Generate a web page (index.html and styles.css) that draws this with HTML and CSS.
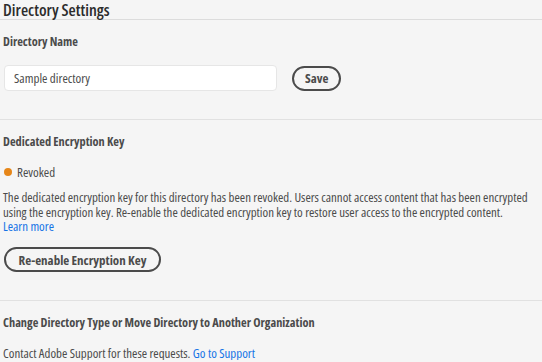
FILE: index.html
```html
<!DOCTYPE html>
<html lang="en">
<head>
  <meta charset="UTF-8">
  <title>Directory Settings</title>
  <link rel="stylesheet" href="styles.css">
</head>
<body>

  <header class="page-head">
    <h1>Directory Settings</h1>
  </header>

  <section class="section">
    <h2>Directory Name</h2>
    <div class="name-row">
      <input class="text-field" type="text" value="Sample directory">
      <button class="btn">Save</button>
    </div>
  </section>

  <section class="section">
    <h2>Dedicated Encryption Key</h2>
    <div class="status"><span class="dot"></span>Revoked</div>
    <p class="desc">The dedicated encryption key for this directory has been revoked. Users cannot access content that has been encrypted using the encryption key. Re-enable the dedicated encryption key to restore user access to the encrypted content.<br><a href="#">Learn more</a></p>
    <button class="btn btn-wide">Re-enable Encryption Key</button>
  </section>

  <section class="section last">
    <h2>Change Directory Type or Move Directory to Another Organization</h2>
    <p class="desc support">Contact Adobe Support for these requests. <a href="#">Go to Support</a></p>
  </section>

</body>
</html>
```

FILE: styles.css
```css
* {
  box-sizing: border-box;
}

body {
  font-family: "Open Sans", Lato, sans-serif;
  font-stretch: 75%;
  margin: 0;
  padding: 0;
  background: #f5f5f5;
  color: #4b4b4b;
  overflow: hidden;
}

.page-head {
  border-bottom: 1px solid #dcdcdc;
  padding: 0 3px;
  height: 20px;
}

h1 {
  margin: 0;
  font-size: 16.5px;
  font-weight: 600;
  line-height: 19px;
  color: #2c2c2c;
}

.section {
  border-bottom: 1px solid #e1e1e1;
  padding: 0 0 0 3px;
}

.section.last {
  border-bottom: none;
}

h2 {
  margin: 0;
  font-size: 12.35px;
  font-weight: 700;
  color: #4b4b4b;
  line-height: 16px;
  padding-top: 14px;
}

.name-row {
  display: flex;
  align-items: center;
  gap: 15px;
  padding: 15px 0 28px 1px;
}

.text-field {
  width: 273px;
  height: 26px;
  border: 1px solid #e6e6e6;
  border-radius: 4px;
  background: #fff;
  padding: 0 9px;
  font-family: inherit;
  font-stretch: inherit;
  font-size: 13px;
  color: #4b4b4b;
  outline: none;
}

.btn {
  height: 25px;
  border: 2px solid #4b4b4b;
  border-radius: 13px;
  background: transparent;
  padding: 0 11px;
  font-family: inherit;
  font-stretch: inherit;
  font-size: 13px;
  font-weight: 700;
  color: #4b4b4b;
  white-space: nowrap;
  cursor: pointer;
}

.btn-wide {
  width: 157px;
  padding: 0;
  margin: 13.5px 0 28px 1px;
}

.status {
  display: flex;
  align-items: center;
  gap: 5px;
  font-size: 13px;
  line-height: 16px;
  margin-top: 14px;
  padding-left: 1px;
}

.dot {
  width: 8px;
  height: 8px;
  border-radius: 50%;
  background: #e68619;
}

.desc {
  margin: 10px -8px 0 0;
  font-size: 12.9px;
  line-height: 14.5px;
}

.desc.support {
  margin-top: 14.5px;
}

.desc a {
  color: #1473e6;
  text-decoration: none;
}
```
